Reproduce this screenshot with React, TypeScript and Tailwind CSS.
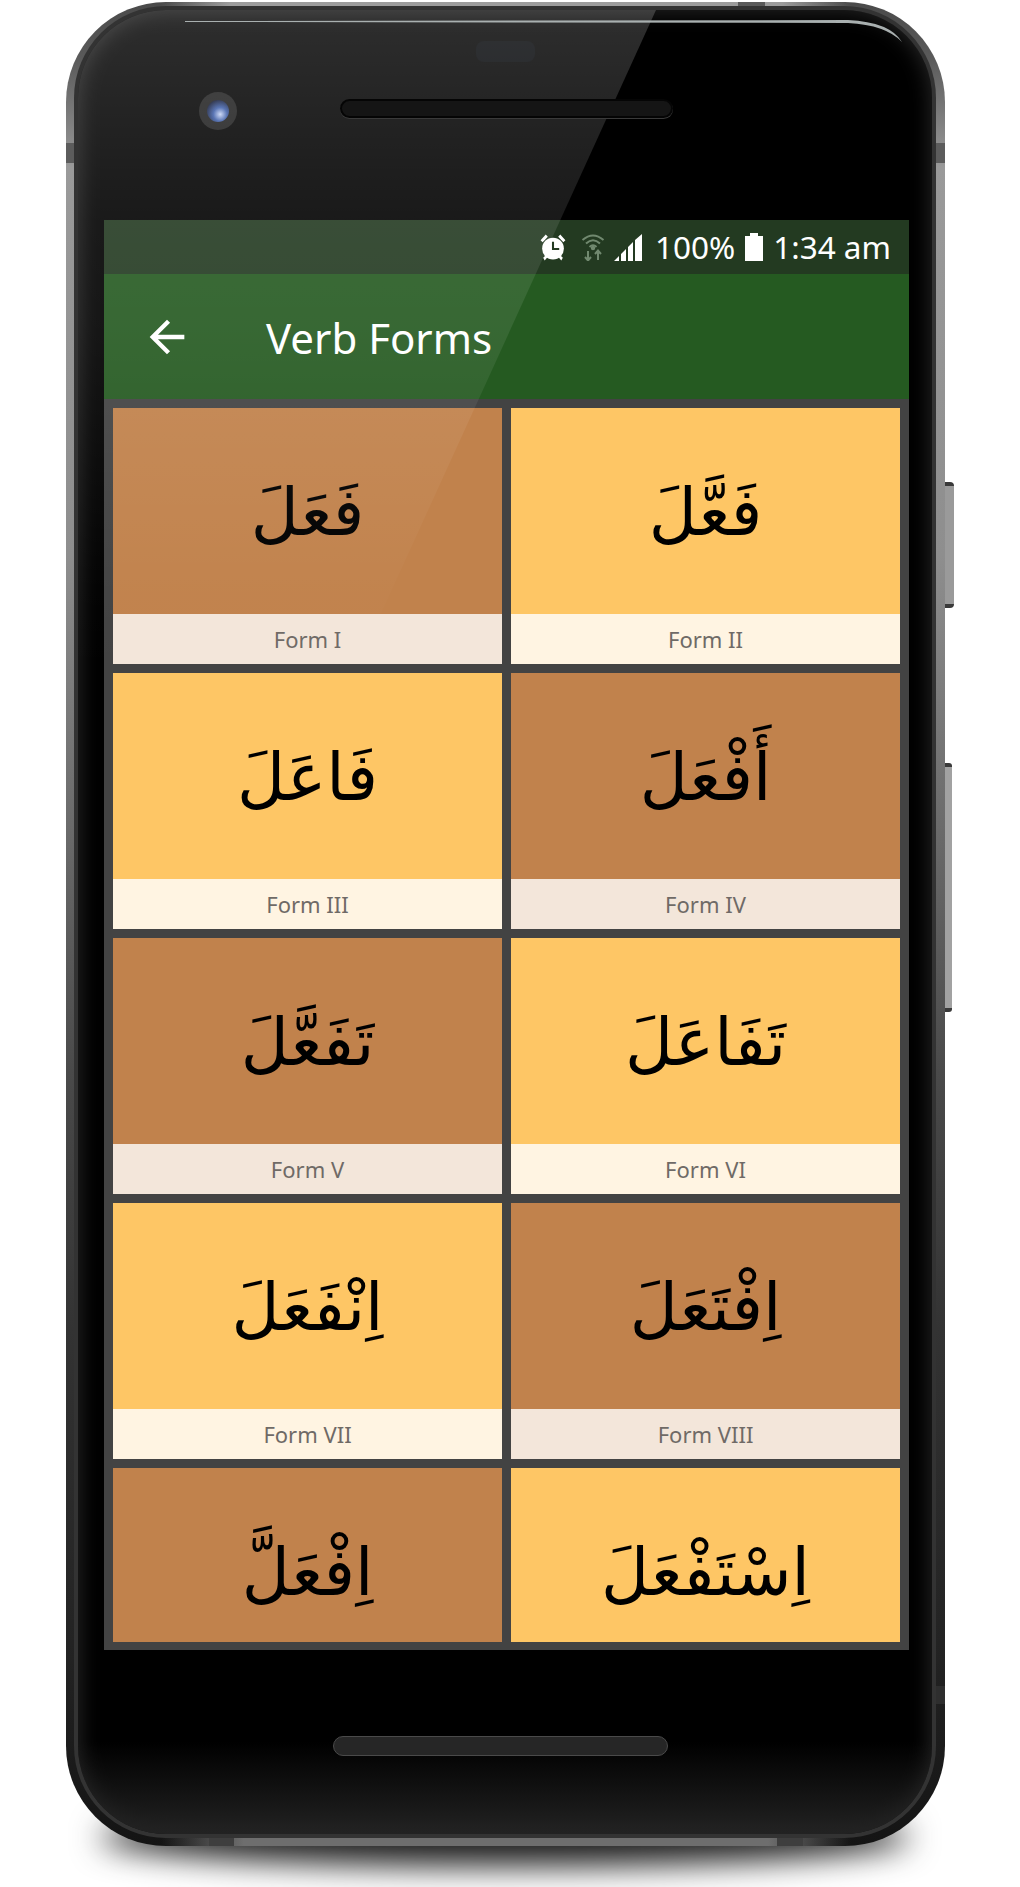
const forms = [
  { word: "فَعَلَ", label: "Form I", dark: true },
  { word: "فَعَّلَ", label: "Form II", dark: false },
  { word: "فَاعَلَ", label: "Form III", dark: false },
  { word: "أَفْعَلَ", label: "Form IV", dark: true },
  { word: "تَفَعَّلَ", label: "Form V", dark: true },
  { word: "تَفَاعَلَ", label: "Form VI", dark: false },
  { word: "اِنْفَعَلَ", label: "Form VII", dark: false },
  { word: "اِفْتَعَلَ", label: "Form VIII", dark: true },
  // the last row runs off the bottom of the screen, no caption in view
  { word: "اِفْعَلَّ", label: "", dark: true },
  { word: "اِسْتَفْعَلَ", label: "", dark: false },
];

function AlarmIcon() {
  return (
    <svg viewBox="0 0 26 28" className="h-[29px] w-[28px]" fill="#fff">
      <circle cx="13" cy="15" r="10.5" />
      <path d="M1 7 L6 1.5 L8 3.5 L3 9 Z M25 7 L20 1.5 L18 3.5 L23 9 Z M3.5 24 L6 21.5 L8 23 L5 26.5 Z M22.5 24 L20 21.5 L18 23 L21 26.5 Z" />
      <path d="M13 8.5 V15.5 H19" fill="none" stroke="#233a21" strokeWidth="2" />
    </svg>
  );
}

function WifiIcon() {
  return (
    <svg viewBox="0 0 23 28" className="h-[28px] w-[24px]" fill="none" stroke="#71896f" strokeWidth="2">
      <path d="M1 7 Q11.500 -2 22 7" />
      <path d="M4.500 10.500 Q11.500 4 18.500 10.500" />
      <path d="M8 14 Q11.500 10.500 15 14" />
      <circle cx="11.500" cy="15" r="1.200" fill="#71896f" />
      <path d="M6.500 18 V27 M3.500 24 L6.500 27.500 L9.500 24 M16.500 27 V18 M13.500 21 L16.500 17.500 L19.500 21" />
    </svg>
  );
}

function SignalIcon() {
  return (
    <svg viewBox="0 0 28 27" className="h-[27px] w-[28px]" fill="#fff">
      <path d="M0 27 L5 22 V27 Z M7 27 V20 L12 15 V27 Z M14 27 V13 L19 8 V27 Z M21 27 V6 L28 0 V27 Z" />
    </svg>
  );
}

function BatteryIcon() {
  return (
    <svg viewBox="0 0 18 28" className="h-[28px] w-[18px]" fill="#fff">
      <path d="M5 0 H13 V3 H18 V28 H0 V3 H5 Z" />
    </svg>
  );
}

function BackArrow() {
  return (
    <svg viewBox="0 0 24 24" className="h-[52px] w-[52px]" fill="#fff">
      <path d="M20 11H7.830l5.590-5.590L12 4l-8 8 8 8 1.410-1.410L7.830 13H20v-2z" />
    </svg>
  );
}

function FormCell({ word, label, dark }: { word: string; label: string; dark: boolean }) {
  return (
    <div className="flex flex-col">
      <div
        className={`flex h-[206px] items-center justify-center pt-[3px] text-black ${dark ? "bg-[#c1824c]" : "bg-[#fec665]"}`}
      >
        <span dir="rtl" className="font-['DejaVu_Sans',sans-serif] text-[66px] leading-none">
          {word}
        </span>
      </div>
      {label && (
        <div
          className={`flex h-[50px] items-center justify-center font-['Noto_Sans',sans-serif] text-[22px] text-[#6f6a66] ${
            dark ? "bg-[#f3e6da]" : "bg-[#fff4e2]"
          }`}
        >
          {label}
        </div>
      )}
    </div>
  );
}

function Screen() {
  return (
    <div className="ml-[26px] w-[805px] font-['Noto_Sans',sans-serif] text-white">
      <div className="flex h-[54px] items-center justify-end bg-[#233a21] pr-[18px] text-[31.5px] leading-none">
        <AlarmIcon />
        <div className="ml-[14px]">
          <WifiIcon />
        </div>
        <div className="ml-[9px]">
          <SignalIcon />
        </div>
        <span className="ml-[13px]">100%</span>
        <div className="ml-[10px]">
          <BatteryIcon />
        </div>
        <span className="ml-[10px]">1:34 am</span>
      </div>
      <div className="flex h-[125px] items-center bg-[#255a21] pl-[37px]">
        <BackArrow />
        <span className="mt-[3px] ml-[73px] text-[42px] leading-none">Verb Forms</span>
      </div>
      <div className="h-[1251px] bg-[#434343] pt-[9px] pr-[9px] pb-[8px] pl-[9px]">
        <div className="grid h-full grid-cols-2 content-start gap-[9px] overflow-hidden">
          {forms.map((f) => (
            <FormCell key={f.word} word={f.word} label={f.label} dark={f.dark} />
          ))}
        </div>
      </div>
    </div>
  );
}

// reflection across the glass, sits over bezel and screen
function Glare() {
  return (
    <svg viewBox="0 0 854 1824" className="pointer-events-none absolute top-0 left-0 h-[1824px] w-[854px]">
      <defs>
        <linearGradient id="glare" gradientUnits="userSpaceOnUse" x1="0" y1="0" x2="0" y2="660">
          <stop offset="0" stopColor="#fff" stopOpacity="0.18" />
          <stop offset="0.32" stopColor="#fff" stopOpacity="0.1" />
          <stop offset="0.48" stopColor="#fff" stopOpacity="0.085" />
          <stop offset="0.62" stopColor="#fff" stopOpacity="0.06" />
          <stop offset="0.88" stopColor="#fff" stopOpacity="0.012" />
          <stop offset="1" stopColor="#fff" stopOpacity="0" />
        </linearGradient>
      </defs>
      <path d="M0 0 H578 L218 790 H0 Z" fill="url(#glare)" />
      <path d="M107 11 L770 10 Q812 12 824 32 Q808 15 770 13 L107 12 Z" fill="#a9b0b0" />
    </svg>
  );
}

export default function App() {
  return (
    <div className="relative h-[1887px] w-[1020px] overflow-hidden bg-white pt-[2px] pl-[66px]">
      {/* drop shadow under the phone */}
      <div className="absolute top-[1808px] left-[100px] h-[58px] w-[810px] rounded-[50%] bg-[#1c1c1c] blur-[16px]" />

      {/* side buttons */}
      <div className="absolute top-[482px] left-[943px] h-[126px] w-[11px] rounded-r-[4px] border-y-[4px] border-[#3a3a3a] bg-[#9a9a9a]" />
      <div className="absolute top-[763px] left-[943px] h-[249px] w-[9px] rounded-r-[3px] border-y-[4px] border-[#3a3a3a] bg-[#a2a2a2]" />

      <div className="relative h-[1844px] w-[879px] rounded-[100px] bg-[linear-gradient(to_bottom,#4a4a4a_0%,#5a5a5a_3%,#9a9a9a_9%,#8e8e8e_30%,#6a6a6a_45%,#4a4a4a_58%,#333333_72%,#222222_90%,#141414_100%)] pt-[8px] pr-[13px] pb-[12px] pl-[12px]">
        {/* metal edge, brighter along the flat top and bottom */}
        <div className="absolute top-0 left-[95px] h-[8px] w-[690px] bg-[linear-gradient(to_right,transparent,#9c9c9c_10%,#9c9c9c_90%,transparent)]" />
        <div className="absolute bottom-0 left-[95px] h-[12px] w-[690px] bg-[linear-gradient(to_right,transparent,#6e6e6e_12%,#6e6e6e_88%,transparent)]" />

        {/* antenna bands */}
        <div className="absolute top-0 left-[672px] h-[8px] w-[27px] bg-[#5a5a5a]" />
        <div className="absolute top-[141px] left-0 h-[20px] w-[12px] bg-[#5c5c5c]" />
        <div className="absolute top-[141px] right-0 h-[20px] w-[13px] bg-[#5c5c5c]" />
        <div className="absolute top-[1684px] right-0 h-[18px] w-[13px] bg-[#2e2e2e]" />
        <div className="absolute bottom-0 left-[143px] h-[12px] w-[25px] bg-[#3e3e3e]" />
        <div className="absolute bottom-0 left-[711px] h-[12px] w-[26px] bg-[#3e3e3e]" />

        <div className="relative h-full w-full overflow-hidden rounded-[88px] bg-black shadow-[0_0_0_4px_#333333,inset_0_0_22px_rgba(80,80,80,0.55)]">
          <div className="flex h-[210px] flex-col">
            <div className="mx-auto mt-[31px] h-[21px] w-[59px] rounded-[8px] bg-[#040609]" />
            <div className="mt-[30px] flex items-center pl-[121px]">
              <div className="flex h-[38px] w-[38px] items-center justify-center rounded-full bg-[#1f1f1f]">
                <div className="h-[22px] w-[22px] rounded-full bg-[radial-gradient(circle_at_60%_65%,#c6d4f5,#3f5fa8_35%,#141c38_75%)]" />
              </div>
              <div className="relative z-10 mb-[5px] ml-[103px] h-[19px] w-[333px] rounded-full border-2 border-[#050505] bg-[#151515] shadow-[0_1px_0_#3a3a3a]" />
            </div>
          </div>

          <Screen />

          <div className="h-[184px] bg-linear-to-b from-transparent from-50% to-[#222222] pt-[86px] pl-[255px]">
            <div className="h-[20px] w-[335px] rounded-full border border-[#4a4a4a] bg-[#262626]" />
          </div>

          <Glare />
        </div>
      </div>
    </div>
  );
}
